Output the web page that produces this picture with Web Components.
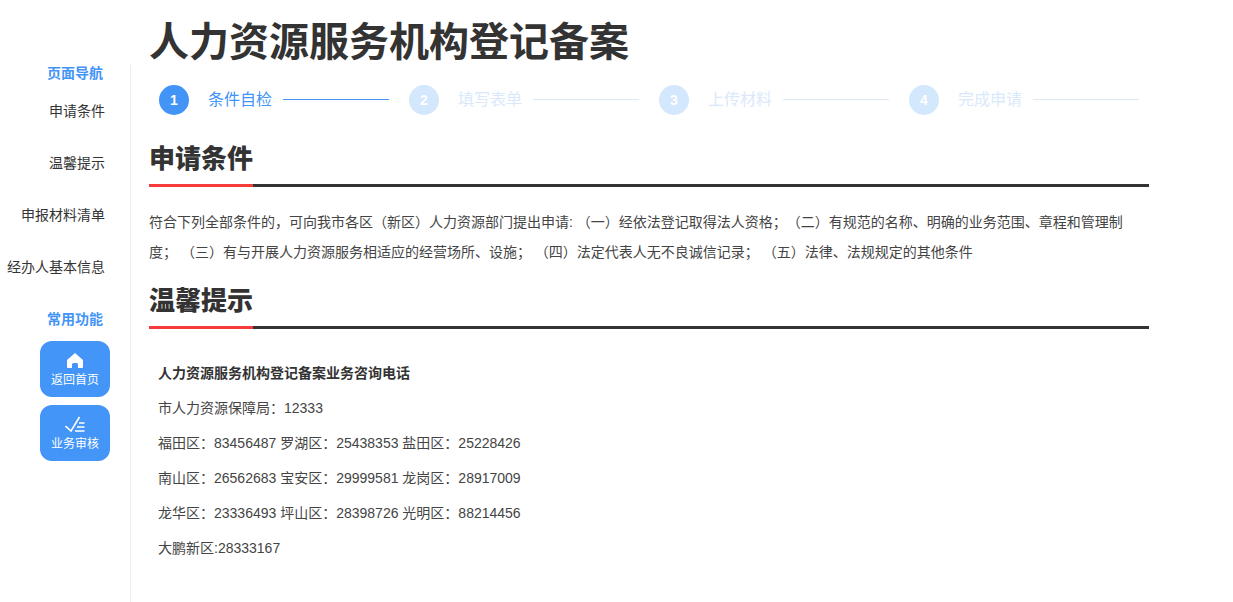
<!DOCTYPE html>
<html lang="zh">
<head>
<meta charset="utf-8">
<title>人力资源服务机构登记备案</title>
<style>
  html, body { margin: 0; padding: 0; background: #fff; }
  body {
    height: 602px;
    overflow: hidden;
    color: #333;
    font-family: "Liberation Sans", "Noto Sans CJK SC", sans-serif;
  }
  .apply { display: flex; align-items: flex-start; }
</style>
</head>
<body>
<div class="apply">
  <side-nav>
    <nav-title>页面导航</nav-title>
    <nav-item>申请条件</nav-item>
    <nav-item>温馨提示</nav-item>
    <nav-item>申报材料清单</nav-item>
    <nav-item>经办人基本信息</nav-item>
    <nav-title second>常用功能</nav-title>
    <side-button>
      <svg slot="icon" width="16" height="16" viewBox="0 0 16 16"><path fill="#fff" fill-rule="evenodd" d="M8 1 L16 8 V15 Q16 16 15 16 H1 Q0 16 0 15 V8 Z M5 16 H11 V12.5 Q11 11 9.5 11 H6.5 Q5 11 5 12.5 Z"/></svg>
      返回首页
    </side-button>
    <side-button>
      <svg slot="icon" width="20" height="16" viewBox="0 0 20 16" fill="none" stroke="#fff" stroke-width="1.6"><path d="M0.5 10 L6 15 L14.5 1"/><path d="M14 7 H19.5 M12 11 H19.5 M10 15 H19.5"/></svg>
      业务审核
    </side-button>
  </side-nav>
  <main-panel>
    <h-title>人力资源服务机构登记备案</h-title>
    <step-bar>
      <step-item num="1" active>条件自检</step-item>
      <step-item num="2">填写表单</step-item>
      <step-item num="3">上传材料</step-item>
      <step-item num="4">完成申请</step-item>
    </step-bar>
    <section-block heading="申请条件">
      <plain-text>符合下列全部条件的，可向我市各区（新区）人力资源部门提出申请: （一）经依法登记取得法人资格；（二）有规范的名称、明确的业务范围、章程和管理制度； （三）有与开展人力资源服务相适应的经营场所、设施； （四）法定代表人无不良诚信记录； （五）法律、法规规定的其他条件</plain-text>
    </section-block>
    <section-block heading="温馨提示">
      <tip-list>
        <b>人力资源服务机构登记备案业务咨询电话</b>
        <span>市人力资源保障局：12333</span>
        <span>福田区：83456487 罗湖区：25438353 盐田区：25228426</span>
        <span>南山区：26562683 宝安区：29999581 龙岗区：28917009</span>
        <span>龙华区：23336493 坪山区：28398726 光明区：88214456</span>
        <span>大鹏新区:28333167</span>
      </tip-list>
    </section-block>
  </main-panel>
</div>
<script>
function makeEl(name, html, setup) {
  customElements.define(name, class extends HTMLElement {
    constructor() {
      super();
      this.attachShadow({ mode: 'open' });
      this.shadowRoot.innerHTML = html;
    }
    connectedCallback() {
      if (setup) setup(this);
    }
  });
}

makeEl('side-nav', `
  <style>
    :host {
      display: flex;
      flex-direction: column;
      align-items: flex-end;
      box-sizing: border-box;
      flex: none;
      width: 131px;
      height: 537px;
      margin-top: 65px;
      border-right: 1px solid #eeeeee;
    }
  </style>
  <slot></slot>
`);

makeEl('nav-title', `
  <style>
    :host {
      display: block;
      align-self: flex-end;
      margin: 0 27px 8px 0;
      font-size: 14px;
      font-weight: bold;
      line-height: 16px;
      color: #4394f7;
    }
    :host([second]) { margin: 14px 27px 14px 0; }
  </style>
  <slot></slot>
`);

makeEl('nav-item', `
  <style>
    :host {
      display: block;
      margin-right: 25px;
      padding-top: 14px;
      height: 38px;
      font-size: 14px;
      line-height: 16px;
      color: #333;
      text-align: right;
      white-space: nowrap;
    }
  </style>
  <slot></slot>
`);

makeEl('side-button', `
  <style>
    :host {
      display: flex;
      flex-direction: column;
      align-items: center;
      box-sizing: border-box;
      width: 70px;
      height: 56px;
      margin: 0 20px 8px 0;
      padding-top: 11px;
      border-radius: 12px;
      background: #4395f8;
      color: #fff;
      font-size: 12px;
      line-height: 16px;
    }
    .ic { display: block; height: 16px; margin-bottom: 4px; }
  </style>
  <div class="ic"><slot name="icon"></slot></div>
  <slot></slot>
`);

makeEl('main-panel', `
  <style>
    :host {
      display: block;
      flex: none;
      width: 1000px;
      margin-left: 18px;
    }
  </style>
  <slot></slot>
`);

makeEl('h-title', `
  <style>
    :host {
      display: block;
      height: 70px;
      padding-top: 12px;
      box-sizing: border-box;
      font-size: 40px;
      font-weight: bold;
      line-height: 60px;
      color: #333;
    }
  </style>
  <slot></slot>
`);

makeEl('step-bar', `
  <style>
    :host {
      display: flex;
      height: 60px;
      padding-left: 10px;
      padding-top: 15px;
      box-sizing: border-box;
    }
  </style>
  <slot></slot>
`);

makeEl('step-item', `
  <style>
    :host {
      display: flex;
      align-items: center;
      flex: none;
      width: 250px;
      height: 30px;
      color: #4394f7;
      font-size: 16px;
      --line: #4394f7;
      --dot: #4394f7;
    }
    :host(:not([active])) {
      color: #d9e9fb;
      --line: #dce9f5;
      --dot: #d3e7fd;
    }
    .num {
      flex: none;
      width: 30px;
      height: 30px;
      margin-right: 19px;
      border-radius: 50%;
      background: var(--dot);
      color: #fff;
      font-size: 14px;
      font-weight: bold;
      line-height: 30px;
      text-align: center;
    }
    .line {
      flex: none;
      width: 106px;
      height: 1px;
      margin: 0 0 1px 11px;
      background: var(--line);
    }
    .txt { width: 64px; white-space: nowrap; line-height: 30px; }
  </style>
  <div class="num"></div>
  <div class="txt"><slot></slot></div>
  <div class="line"></div>
`, el => {
  el.shadowRoot.querySelector('.num').textContent = el.getAttribute('num');
});

makeEl('section-block', `
  <style>
    :host { display: block; }
    h2 {
      margin: 0;
      height: 57px;
      padding-top: 9px;
      box-sizing: border-box;
      font-size: 26px;
      font-weight: bold;
      line-height: 40px;
      color: #333;
      border-bottom: 3px solid #333;
      position: relative;
    }
    h2 span {
      position: absolute;
      left: 0;
      bottom: -3px;
      width: 104px;
      height: 3px;
      background: #f73a3a;
    }
  </style>
  <h2><span></span><b></b></h2>
  <slot></slot>
`, el => {
  el.shadowRoot.querySelector('b').textContent = el.getAttribute('heading');
});

makeEl('plain-text', `
  <style>
    :host {
      display: block;
      padding: 20px 0 5px;
      font-size: 14px;
      line-height: 30px;
      color: #444;
      text-spacing-trim: space-all;
    }
  </style>
  <slot></slot>
`);

makeEl('tip-list', `
  <style>
    :host {
      display: flex;
      flex-direction: column;
      align-items: flex-start;
      padding: 27px 0 0 9px;
      font-size: 14px;
      line-height: 35px;
      color: #444;
      text-spacing-trim: space-all;
    }
    ::slotted(*) { display: block; white-space: nowrap; height: 35px; }
    ::slotted(b) { color: #333; }
  </style>
  <slot></slot>
`);
</script>
</body>
</html>
